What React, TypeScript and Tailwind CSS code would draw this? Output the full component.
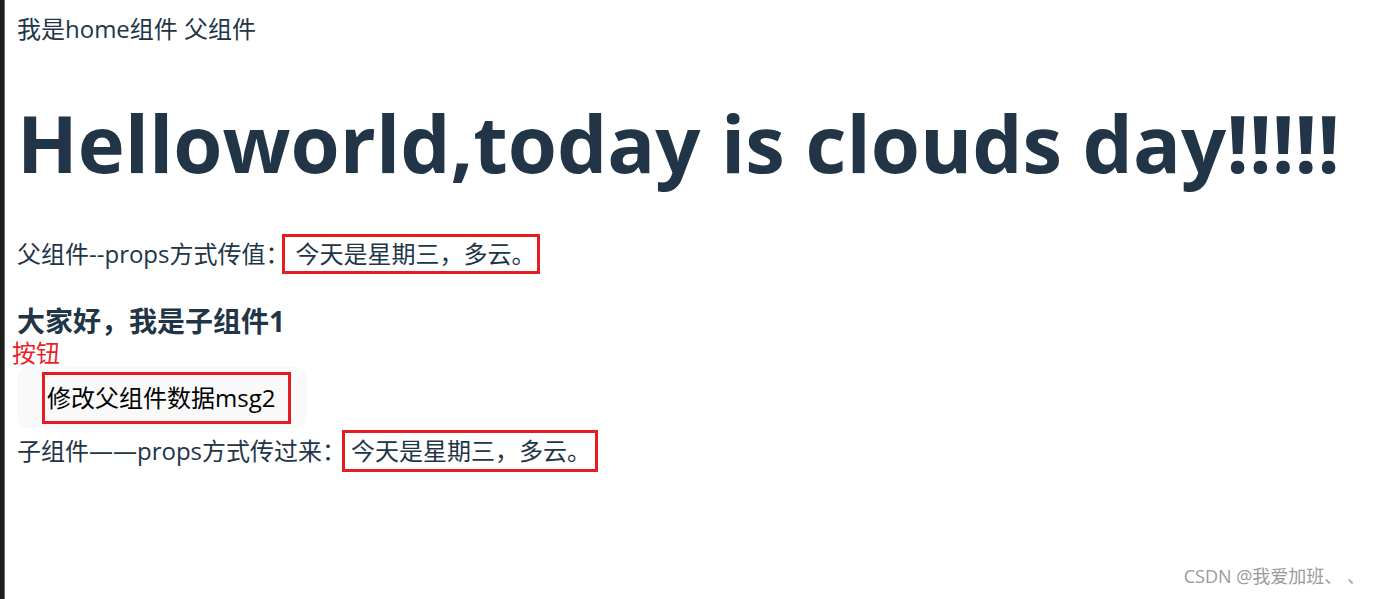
import * as React from 'react'

const font = { fontFamily: '"Open Sans", "Noto Sans CJK SC", sans-serif' }

function Marked({ children, className = '' }: { children: React.ReactNode; className?: string }) {
  // red annotation box around a value
  return (
    <span className={`inline-flex items-center border-[3px] border-[#e41c24] ${className}`}>
      {children}
    </span>
  )
}

export default function App() {
  const msg = '今天是星期三，多云。'

  return (
    <div
      className="relative flex min-h-screen bg-white text-[24px] text-[#213547]"
      style={font}
    >
      {/* dark window edge */}
      <div className="w-[5px] shrink-0 border-r border-[#6b6b6b] bg-[#1e1e1e]" />

      <div className="flex flex-col pl-[12px] pt-[11px]">
        <div className="h-[36px] leading-[36px]">我是home组件 父组件</div>

        <h1 className="mt-[40px] h-[110px] text-[79.5px] font-bold leading-[110px] whitespace-nowrap">
          Helloworld,today is clouds day!!!!!
        </h1>

        <div className="mt-[37px] flex h-[40px] items-center">
          <span>父组件--props方式传值：</span>
          <Marked className="ml-[-8px] h-[40px] w-[258px] pl-[11px]">{msg}</Marked>
        </div>

        <h3 className="mt-[32px] h-[30px] text-[28px] font-bold leading-[30px]">
          大家好，我是子组件1
        </h3>

        <div className="ml-[-5px] mt-[3px] h-[28px] leading-[28px] text-[#ea1f27]">按钮</div>

        <button className="flex h-[61px] w-[290px] items-center rounded-[12px] bg-[#f9f9f9] pl-[25px] text-black">
          <Marked className="h-[52px] w-[249px] pl-[2px]">修改父组件数据msg2</Marked>
        </button>

        <div className="mt-[2px] flex h-[42px] items-center">
          <span>子组件——props方式传过来：</span>
          <Marked className="ml-[-4px] h-[42px] w-[256px] pl-[6px]">{msg}</Marked>
        </div>
      </div>

      {/* watermark */}
      <div className="absolute bottom-[9px] right-[14px] text-[18px] text-[#9a9a9a]">
        CSDN @我爱加班、 、
      </div>
    </div>
  )
}
